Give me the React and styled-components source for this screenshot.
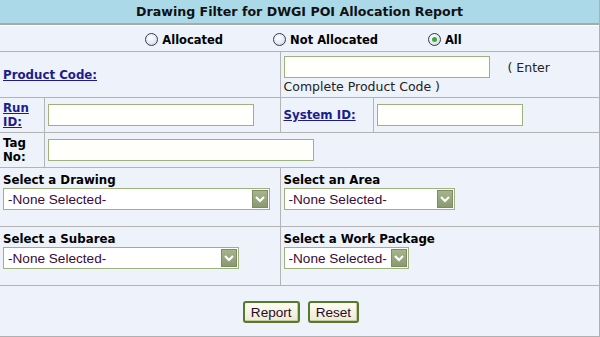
import styled, { createGlobalStyle } from "styled-components";

const GlobalStyle = createGlobalStyle`
  html, body {
    margin: 0;
    padding: 0;
    background: #eef2fb;
  }
  * { box-sizing: border-box; }
`;

const Frame = styled.div`
  width: 600px;
  height: 337px;
  background: #eef2fb;
  border-right: 1px solid #b0b0b0;
  border-bottom: 1px solid #b0b0b0;
  font-family: "DejaVu Sans", Verdana, sans-serif;
  font-size: 11.5px;
  color: #000;
  overflow: hidden;
`;

const Header = styled.div`
  height: 25px;
  background: #abd9e8;
  border-bottom: 2px solid #a9a9a9;
  display: flex;
  align-items: center;
  justify-content: center;
  font-weight: bold;
  font-size: 12.6px;
  color: #111;
`;

const Grid = styled.table`
  width: 599px;
  border-collapse: collapse;
  table-layout: fixed;

  td {
    border: 1px solid #b4b4b4;
    padding: 2px 3px;
  }
  tr:first-child td { border-top: 1px solid #fff; }
  td:first-child { border-left: none; }
  td:last-child { border-right: none; }
`;

const Row = styled.tr`
  height: ${(p) => p.$h}px;
`;

const Cell = styled.td`
  vertical-align: ${(p) => (p.$top ? "top" : "middle")};
  text-align: ${(p) => (p.$center ? "center" : "left")};
  && {
    padding-top: ${(p) => (p.$top ? "5px" : "2px")};
  }
`;

const RadioGroup = styled.div`
  display: flex;
  justify-content: center;
  gap: 50px;
  padding-left: 8px;
  padding-top: 2px;
  font-weight: bold;
  font-size: 11.5px;
`;

const RadioItem = styled.label`
  display: flex;
  align-items: center;
  gap: 4px;
`;

const RadioDot = styled.span`
  width: 13px;
  height: 13px;
  border-radius: 50%;
  border: 1px solid #2c3c5a;
  background: radial-gradient(circle at 40% 35%, #ffffff 0%, #e6e9ee 55%, #c4c9d2 100%);
  display: inline-flex;
  align-items: center;
  justify-content: center;

  &::after {
    content: "";
    width: 5px;
    height: 5px;
    border-radius: 50%;
    background: ${(p) => (p.$checked ? "#3aa83a" : "transparent")};
  }
`;

const LinkLabel = styled.a`
  color: #1c1c8c;
  font-weight: bold;
  text-decoration: underline;
  line-height: 14px;
  font-size: 11.8px;
`;

const Label = styled.div`
  font-weight: bold;
  line-height: 14px;
  font-size: 11.8px;
  color: #000;
`;

const TextInput = styled.input`
  width: ${(p) => p.$w}px;
  height: 22px;
  border: 1px solid #9db27c;
  background: #fffffb;
  display: block;
  margin: 1px 0;
`;

const Note = styled.div`
  font-size: 12.5px;
  color: #222;
  line-height: 15px;
`;

const NoteTop = styled.div`
  display: flex;
  align-items: center;
  gap: 18px;
`;

const SelectBox = styled.div`
  width: ${(p) => p.$w}px;
  height: 22px;
  border: 1px solid #9db27c;
  background: #fff;
  display: flex;
  align-items: center;
  margin-top: 1px;
`;

const SelectText = styled.div`
  flex: 1;
  font-family: "Liberation Sans", Arial, sans-serif;
  font-size: 13.6px;
  color: #3a0a3a;
  padding-left: 4px;
  white-space: nowrap;
  overflow: hidden;
`;

const Arrow = styled.span`
  width: 16px;
  height: 18px;
  margin-right: 1px;
  border: 1px solid #7c8c64;
  background: linear-gradient(#a6b48c, #8a9a70);
  display: flex;
  align-items: center;
  justify-content: center;
`;

const ButtonBar = styled.div`
  display: flex;
  justify-content: center;
  gap: 8px;
  padding-top: 15px;
  padding-left: 3px;
`;

const Button = styled.button`
  height: 22px;
  padding: 0 6px;
  border: 2px solid #557a2c;
  border-radius: 3px;
  background: linear-gradient(#fdfdf2, #ecebd4);
  font-family: "Liberation Sans", Arial, sans-serif;
  font-size: 13.6px;
  color: #2a0a2a;
  box-shadow: inset -1px -1px 0 #c9c7a8;
`;

const Chevron = () => (
  <svg width="10" height="8" viewBox="0 0 10 8">
    <path d="M1 2 L5 6 L9 2" fill="none" stroke="#fff" strokeWidth="2.2" />
  </svg>
);

const Dropdown = ({ w }) => (
  <SelectBox $w={w}>
    <SelectText>-None Selected-</SelectText>
    <Arrow>
      <Chevron />
    </Arrow>
  </SelectBox>
);

export default function App() {
  return (
    <Frame>
      <GlobalStyle />
      <Header>Drawing Filter for DWGI POI Allocation Report</Header>
      <Grid>
        <colgroup>
          <col style={{ width: 44 }} />
          <col style={{ width: 236 }} />
          <col style={{ width: 93 }} />
          <col style={{ width: 226 }} />
        </colgroup>
        <tbody>
          <Row $h={26}>
            <Cell colSpan={4} $center>
              <RadioGroup>
                <RadioItem>
                  <RadioDot />
                  Allocated
                </RadioItem>
                <RadioItem>
                  <RadioDot />
                  Not Allocated
                </RadioItem>
                <RadioItem>
                  <RadioDot $checked />
                  All
                </RadioItem>
              </RadioGroup>
            </Cell>
          </Row>
          <Row $h={46}>
            <Cell colSpan={2}>
              <LinkLabel href="#">Product Code:</LinkLabel>
            </Cell>
            <Cell colSpan={2}>
              <NoteTop>
                <TextInput $w={206} />
                <Note>( Enter</Note>
              </NoteTop>
              <Note>Complete Product Code )</Note>
            </Cell>
          </Row>
          <Row $h={35}>
            <Cell>
              <LinkLabel href="#">Run ID:</LinkLabel>
            </Cell>
            <Cell>
              <TextInput $w={206} />
            </Cell>
            <Cell>
              <LinkLabel href="#">System ID:</LinkLabel>
            </Cell>
            <Cell>
              <TextInput $w={146} />
            </Cell>
          </Row>
          <Row $h={35}>
            <Cell>
              <Label>Tag No:</Label>
            </Cell>
            <Cell colSpan={3}>
              <TextInput $w={266} />
            </Cell>
          </Row>
          <Row $h={59}>
            <Cell colSpan={2} $top>
              <Label>Select a Drawing</Label>
              <Dropdown w={267} />
            </Cell>
            <Cell colSpan={2} $top>
              <Label>Select an Area</Label>
              <Dropdown w={171} />
            </Cell>
          </Row>
          <Row $h={59}>
            <Cell colSpan={2} $top>
              <Label>Select a Subarea</Label>
              <Dropdown w={236} />
            </Cell>
            <Cell colSpan={2} $top>
              <Label>Select a Work Package</Label>
              <Dropdown w={125} />
            </Cell>
          </Row>
        </tbody>
      </Grid>
      <ButtonBar>
        <Button>Report</Button>
        <Button>Reset</Button>
      </ButtonBar>
    </Frame>
  );
}
